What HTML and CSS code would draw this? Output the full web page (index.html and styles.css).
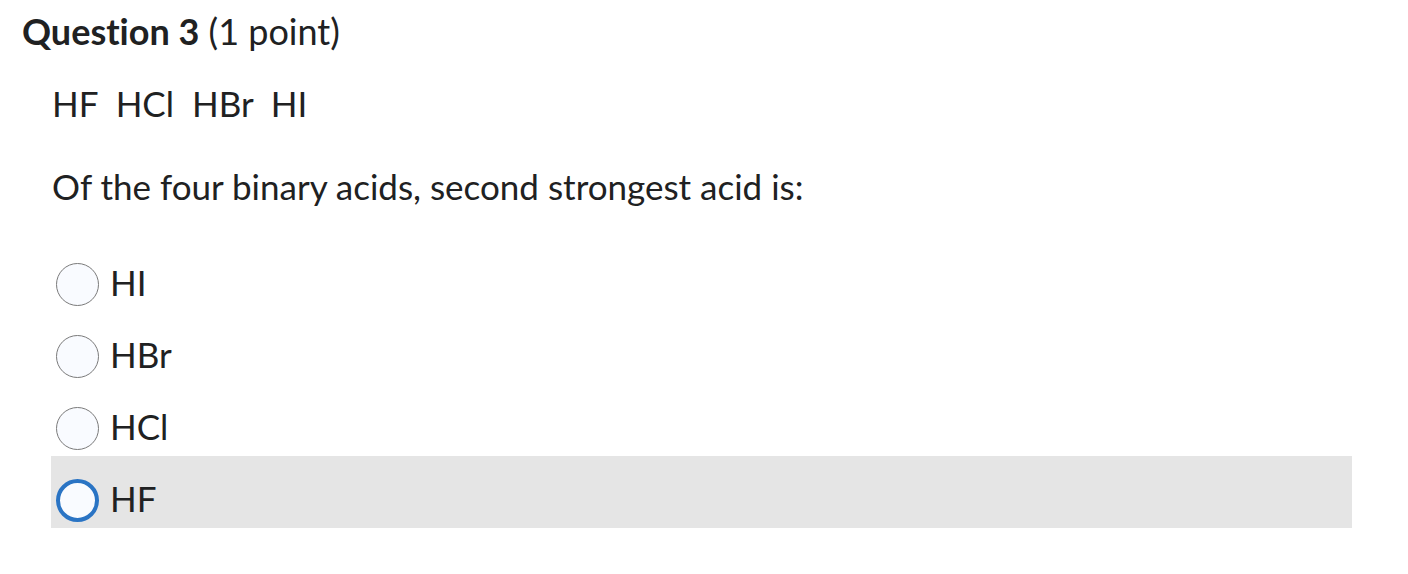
FILE: index.html
```html
<!DOCTYPE html>
<html>
<head>
<meta charset="utf-8">
<link rel="stylesheet" href="styles.css">
</head>
<body>
<div class="page">
  <h2 class="title"><span class="title-strong">Question 3</span> (1 point)</h2>
  <div class="content">
    <p class="line first">HF&nbsp; HCl&nbsp; HBr&nbsp; HI</p>
    <p class="line prompt">Of the four binary acids, second strongest acid is:</p>
    <div class="options">
      <label class="option"><span class="radio"></span><span class="opt-text">HI</span></label>
      <label class="option"><span class="radio"></span><span class="opt-text">HBr</span></label>
      <label class="option"><span class="radio"></span><span class="opt-text">HCl</span></label>
      <label class="option active"><span class="radio focus"></span><span class="opt-text">HF</span></label>
    </div>
  </div>
</div>
</body>
</html>
```
FILE: styles.css
```css
* { box-sizing: border-box; }
html, body { margin: 0; padding: 0; background: #fff; }
body {
  font-family: Lato, "Open Sans", sans-serif;
  color: #202122;
  font-variant-ligatures: none;
}
.page {
  width: 1408px;
  height: 574px;
  padding: 10px 56px 0 22px;
}
.title {
  margin: 0;
  font-size: 36px;
  font-weight: 400;
  line-height: 42px;
}
.title-strong { font-weight: 700; }
.content {
  padding-left: 30px;
}
.line {
  margin: 0;
  font-size: 35px;
  line-height: 42px;
}
.line.first { margin-top: 30px; }
.prompt { margin-top: 41px; }
.options {
  margin-top: 33px;
  margin-left: -1px;
  display: flex;
  flex-direction: column;
}
.option {
  display: flex;
  align-items: center;
  height: 72px;
  padding: 16px 0 0 5px;
  gap: 11px;
  font-size: 35px;
}
.opt-text {
  line-height: 42px;
  margin-top: -4px;
}
.option.active { background: #e5e5e5; }
.radio {
  width: 43px;
  height: 43px;
  border-radius: 50%;
  border: 1.5px solid #7a7a7a;
  background: #f9fbff;
  flex: none;
}
.radio.focus {
  border: 4px solid #2a74c4;
}
```
